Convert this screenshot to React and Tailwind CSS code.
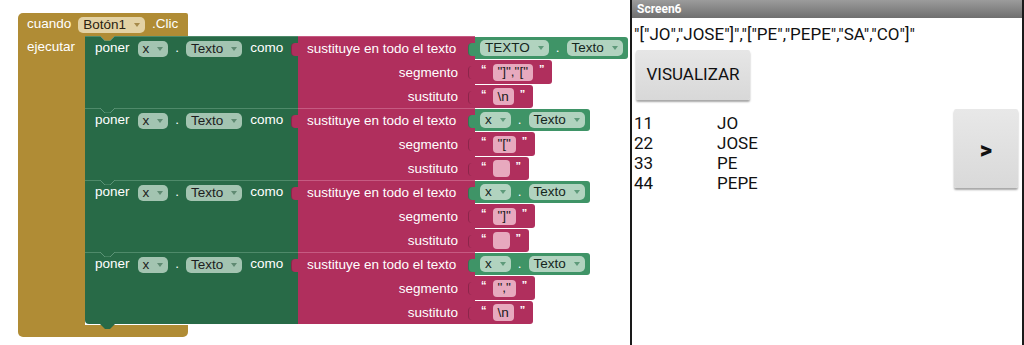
import React from 'react';

const Arrow = ({ className = '' }) => (
  <svg width="6" height="4" viewBox="0 0 6 4" className={className}>
    <path d="M0 0h6L3 4z" fill="currentColor" />
  </svg>
);

const Dropdown = ({ label, className = '', arrow = '' }) => (
  <span className={`flex h-[16px] items-center gap-[8px] rounded-[5px] pl-[5px] pr-[5px] ${className}`}>
    <span className="leading-none">{label}</span>
    <Arrow className={arrow} />
  </span>
);

const Tab = ({ className = '' }) => (
  <span className={`absolute -left-[7px] top-[6px] h-[13px] w-[8px] rounded-l-[4px] border-l border-black/20 ${className}`} />
);

const Notch = ({ fill, className = '' }) => (
  <svg width="15" height="5" viewBox="0 0 15 5" className={`absolute left-[15px] ${className}`}>
    <path d="M0 0l5 5h5l5-5z" fill={fill} />
    <path d="M0 0l5 5h5l5-5" fill="none" stroke="#5c9477" strokeWidth="1" />
  </svg>
);

const Getter = ({ obj }) => (
  <div className="relative flex h-[22px] w-fit items-center gap-[7px] rounded-r-[3px] bg-[#3f9467] pl-[5px] pr-[5px] text-white">
    <Tab className="top-[4px] bg-[#3f9467]" />
    <Dropdown label={obj} className="bg-[#b1d3bf] text-[#15261d]" arrow="text-[#5e9a7a]" />
    <span>.</span>
    <Dropdown label="Texto" className="bg-[#b1d3bf] text-[#15261d]" arrow="text-[#5e9a7a]" />
  </div>
);

const TextBlock = ({ value, h = 'h-[24px]' }) => (
  <div className={`relative flex w-fit items-center gap-[6px] rounded-r-[3px] bg-[#b02f5d] pl-[6px] pr-[8px] ${h}`}>
    <Tab className="top-[5px] bg-[#b02f5d]" />
    <span className="-mt-[5px] text-[11px] font-bold leading-none text-white">“</span>
    <span className="flex h-[17px] min-w-[17px] items-center justify-center rounded-[4px] bg-[#e7a9be] px-[5px] leading-none text-[#1a1a1a]">
      {value}
    </span>
    <span className="-mt-[5px] text-[11px] font-bold leading-none text-white">”</span>
  </div>
);

const Row = ({ obj, segmento, sustituto, first, last }) => (
  <div className="flex h-[72px]">
    <div className={`relative w-[213px] border-t border-[#4f8a6a] bg-[#286a47] ${last ? 'rounded-bl-[4px]' : ''}`}>
      <Notch fill={first ? '#b08c35' : '#286a47'} className="-top-px" />
      {last && (
        <svg width="15" height="5" viewBox="0 0 15 5" className="absolute -bottom-[5px] left-[15px]">
          <path d="M0 0l5 5h5l5-5z" fill="#286a47" />
        </svg>
      )}
      <div className="flex h-[23px] items-center gap-[8px] pl-[10px] text-white">
        <span>poner</span>
        <Dropdown label="x" className="bg-[#a3c4b1] text-[#1d1d1d]" arrow="text-[#5f8a72]" />
        <span className="-mx-[1px]">.</span>
        <Dropdown label="Texto" className="bg-[#a3c4b1] text-[#1d1d1d]" arrow="text-[#5f8a72]" />
        <span>como</span>
      </div>
    </div>
    <div className="relative w-[177px] border-t border-[#c65a82] bg-[#b02f5d] text-white">
      <Tab className="top-[6px] bg-[#b02f5d]" />
      <div className="flex h-[24px] items-center pl-[9px]">sustituye en todo el texto</div>
      <div className="flex h-[25px] items-center justify-end pr-[17px]">segmento</div>
      <div className="flex h-[23px] items-center justify-end pr-[17px]">sustituto</div>
    </div>
    <div className="flex flex-col pt-[1px]">
      <Getter obj={obj} />
      <div className="mt-[1px]">
        <TextBlock value={segmento} />
      </div>
      <div className="mt-[1px]">
        <TextBlock value={sustituto} h="h-[23px]" />
      </div>
    </div>
  </div>
);

const rows = [
  { obj: 'TEXTO', segmento: '"]","["', sustituto: '\\n' },
  { obj: 'x', segmento: '"["', sustituto: '' },
  { obj: 'x', segmento: '"]"', sustituto: '' },
  { obj: 'x', segmento: '","', sustituto: '\\n' },
];

const list = [
  ['11', 'JO'],
  ['22', 'JOSE'],
  ['33', 'PE'],
  ['44', 'PEPE'],
];

export default function App() {
  return (
    <div className="flex h-[345px] w-[1024px] overflow-hidden bg-white">
      <div className="w-[630px] pl-[18px] pt-[13px] font-['Liberation_Sans',Arial,sans-serif] text-[13.5px]">
        <div className="flex flex-col">
          <div className="flex h-[23px] w-[170px] items-center gap-[7px] rounded-tl-[5px] rounded-tr-[2px] bg-[#b08c35] pl-[9px] text-white">
            <span>cuando</span>
            <Dropdown label="Botón1" className="bg-[#e3d2a4] text-[#2a2210]" arrow="text-[#a68a4a]" />
            <span>.Clic</span>
          </div>
          <div className="flex">
            <div className="w-[67px] bg-[#b08c35] pl-[9px] text-white">
              <div className="flex h-[22px] items-center">ejecutar</div>
            </div>
            <div className="flex flex-col">
              {rows.map((r, i) => (
                <Row key={i} {...r} first={i === 0} last={i === rows.length - 1} />
              ))}
              <div className="h-px" />
            </div>
          </div>
          <div className="h-[12px] w-[170px] rounded-b-[5px] bg-[#b08c35]" />
        </div>
      </div>

      <div className="flex h-[345px] w-[394px] flex-col border-x-2 border-[#1a1a1a] font-['Roboto',Arial,sans-serif]">
        <div className="flex h-[18px] items-center bg-gradient-to-b from-[#9c9c9c] to-[#6f6f6f] pl-[5px] text-[12px] font-bold text-white">
          Screen6
        </div>
        <div className="mt-[4px] pl-[2px] text-[17px] leading-[24px] text-[#111]">
          "["JO","JOSE"]","["PE","PEPE","SA","CO"]"
        </div>
        <button className="ml-[4px] mt-[4px] h-[50px] w-[114px] rounded-[2px] bg-gradient-to-b from-[#e6e6e6] to-[#d8d8d8] text-[17px] text-[#111] shadow-[0_2px_2px_rgba(0,0,0,0.35)]">
          VISUALIZAR
        </button>
        <div className="mt-[8px] flex justify-between pr-[4px]">
          <div className="grid grid-cols-[83px_auto] pl-[2px] pt-[5px] text-[17px] leading-[20px] text-[#111]">
            {list.map(([n, name]) => (
              <React.Fragment key={n}>
                <span>{n}</span>
                <span>{name}</span>
              </React.Fragment>
            ))}
          </div>
          <button className="mt-[1px] flex h-[79px] w-[64px] items-center justify-center rounded-[2px] bg-gradient-to-b from-[#e8e8e8] to-[#d9d9d9] pt-[3px] text-[24px] font-black text-[#111] shadow-[0_2px_2px_rgba(0,0,0,0.35)]">
            &gt;
          </button>
        </div>
      </div>
    </div>
  );
}
